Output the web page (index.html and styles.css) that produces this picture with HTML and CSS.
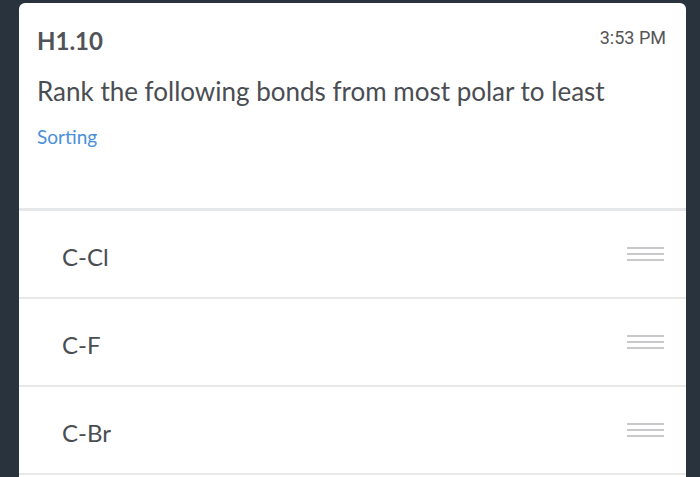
FILE: index.html
```html
<!DOCTYPE html>
<html lang="en">
<head>
  <meta charset="UTF-8" />
  <title>H1.10 Sorting</title>
  <link rel="stylesheet" href="styles.css">
</head>
<body>

<main class="card">
  <header class="card-head">
    <div class="head-row">
      <h1 class="qid">H1.10</h1>
      <span class="time">3:53 PM</span>
    </div>
    <p class="prompt">Rank the following bonds from most polar to least</p>
    <p class="qtype">Sorting</p>
  </header>

  <ul class="sort-list">
    <li class="sort-item">
      <span>C-Cl</span>
      <span class="handle"><i></i><i></i><i></i></span>
    </li>
    <li class="sort-item">
      <span>C-F</span>
      <span class="handle"><i></i><i></i><i></i></span>
    </li>
    <li class="sort-item">
      <span>C-Br</span>
      <span class="handle"><i></i><i></i><i></i></span>
    </li>
  </ul>
</main>

</body>
</html>
```

FILE: styles.css
```css
body {
  margin: 0;
  padding: 3px 14px 0 19px;
  background: #29333d;
  font-family: 'Lato', 'Open Sans', sans-serif;
  color: #4a4d52;
  height: 477px;
  box-sizing: border-box;
  overflow: hidden;
}
.card {
  background: #fff;
  border-radius: 6px 6px 0 0;
  height: 100%;
}
.card-head {
  padding: 24px 20px 0 18px;
  height: 208px;
  box-sizing: border-box;
  border-bottom: 3px solid #e6e7e9;
}
.head-row {
  display: flex;
  justify-content: space-between;
  align-items: center;
}
.qid {
  margin: 0;
  font-size: 24px;
  font-weight: bold;
  line-height: 28px;
  color: #505357;
}
.time {
  font-family: 'Roboto', sans-serif;
  font-size: 18px;
  color: #555;
  margin-top: -7px;
}
.prompt {
  margin: 20px 0 0;
  font-size: 26px;
  line-height: 32px;
}
.qtype {
  margin: 18px 0 0;
  font-size: 19px;
  color: #4a90d9;
}
.sort-list {
  list-style: none;
  margin: 0;
  padding: 0;
}
.sort-item {
  display: flex;
  justify-content: space-between;
  align-items: center;
  height: 86px;
  box-sizing: content-box;
  padding: 0 22px 0 43px;
  border-bottom: 2px solid #e8e9eb;
  font-size: 24px;
}
.sort-item > span:first-child {
  padding-top: 4px;
}
.handle {
  display: flex;
  flex-direction: column;
  gap: 4px;
  width: 37px;
}
.handle i {
  display: block;
  height: 2px;
  background: #c9c9cb;
}
```
